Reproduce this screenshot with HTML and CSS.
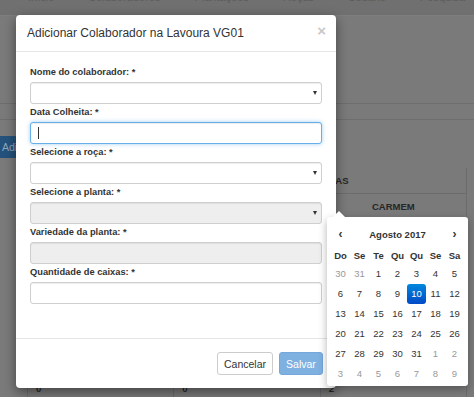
FILE: index.html
```
<!DOCTYPE html>
<html lang="pt-BR">

<head>
    <meta charset="UTF-8">
    <meta name="viewport" content="width=device-width, initial-scale=1.0">
    <title>Colheita</title>
    <link rel="stylesheet" href="styles.css">
</head>

<body>
    <div class="page">
        <nav class="topnav">
            <span>Início</span>
            <span>Colaboradores</span>
            <span>Plantações</span>
            <span>Roças</span>
            <span>Usuário</span>
            <span>Pesquisa</span>
            <span>Logout</span>
        </nav>
        <div class="content">
            <div class="bg-lines">
                <div></div>
                <div></div>
            </div>
            <button class="btn-add">Adicionar</button>
            <table class="bg-table">
                <tr><th></th><th></th><th class="cut">CAIXAS</th></tr>
                <tr><th></th><th></th><th>CARMEM</th></tr>
                <tr><td></td><td></td><td></td></tr>
                <tr><td></td><td></td><td></td></tr>
                <tr><td></td><td></td><td></td></tr>
                <tr><td></td><td></td><td></td></tr>
                <tr><td></td><td></td><td></td></tr>
                <tr><td></td><td></td><td></td></tr>
                <tr><td>0</td><td>0</td><td>2</td></tr>
            </table>
        </div>
    </div>

    <div class="modal">
        <div class="modal-header">
            <span class="modal-title">Adicionar Colaborador na Lavoura VG01</span>
            <span class="close">&times;</span>
        </div>
        <div class="modal-body">
            <div class="form-group">
                <label>Nome do colaborador: *</label>
                <div class="field select"><i class="arrow"></i></div>
            </div>
            <div class="form-group">
                <label>Data Colheita: *</label>
                <div class="field focused"><i class="caret"></i></div>
            </div>
            <div class="form-group">
                <label>Selecione a roça: *</label>
                <div class="field select"><i class="arrow"></i></div>
            </div>
            <div class="form-group">
                <label>Selecione a planta: *</label>
                <div class="field select disabled"><i class="arrow"></i></div>
            </div>
            <div class="form-group">
                <label>Variedade da planta: *</label>
                <div class="field disabled"></div>
            </div>
            <div class="form-group">
                <label>Quantidade de caixas: *</label>
                <div class="field"></div>
            </div>
        </div>
        <div class="modal-footer">
            <button class="btn btn-default">Cancelar</button>
            <button class="btn btn-primary">Salvar</button>
        </div>
    </div>

    <div class="datepicker">
        <div class="dp-grid">
            <span class="dp-nav">&lsaquo;</span>
            <span class="dp-switch">Agosto 2017</span>
            <span class="dp-nav">&rsaquo;</span>

            <span class="dow">Do</span><span class="dow">Se</span><span class="dow">Te</span><span class="dow">Qu</span><span class="dow">Qu</span><span class="dow">Se</span><span class="dow">Sa</span>

            <span class="day old">30</span><span class="day old">31</span><span class="day">1</span><span class="day">2</span><span class="day">3</span><span class="day">4</span><span class="day">5</span>
            <span class="day">6</span><span class="day">7</span><span class="day">8</span><span class="day">9</span><span class="day active">10</span><span class="day">11</span><span class="day">12</span>
            <span class="day">13</span><span class="day">14</span><span class="day">15</span><span class="day">16</span><span class="day">17</span><span class="day">18</span><span class="day">19</span>
            <span class="day">20</span><span class="day">21</span><span class="day">22</span><span class="day">23</span><span class="day">24</span><span class="day">25</span><span class="day">26</span>
            <span class="day">27</span><span class="day">28</span><span class="day">29</span><span class="day">30</span><span class="day">31</span><span class="day old">1</span><span class="day old">2</span>
            <span class="day old">3</span><span class="day old">4</span><span class="day old">5</span><span class="day old">6</span><span class="day old">7</span><span class="day old">8</span><span class="day old">9</span>
        </div>
    </div>
</body>

</html>
```

FILE: styles.css
```
html,
body {
    margin: 0;
    height: 100%;
    overflow: hidden;
}

body {
    font-family: "Liberation Sans", Arial, sans-serif;
    background-color: #7a7a7a;
    color: #333;
}

.topnav {
    height: 15px;
    background-color: #707070;
    display: flex;
    gap: 34px;
    padding-left: 28px;
    overflow: hidden;
    border-bottom: 1px solid #7e7e7e;
}

.topnav span {
    font-size: 11px;
    color: #5c5c5c;
    margin-top: -9px;
}

.content {
    position: relative;
}

.bg-lines div {
    height: 15px;
    border-bottom: 1px solid #6e6e6e;
    margin-top: 72px;
}

.bg-lines div + div {
    margin-top: 0;
}

.btn-add {
    display: block;
    width: 26px;
    margin: 16px 0 0 -8px;
    height: 22px;
    padding: 0 0 0 10px;
    border: none;
    background-color: #24527c;
    color: #8fa6bd;
    font-family: inherit;
    font-size: 10.5px;
    text-align: left;
    white-space: nowrap;
    overflow: hidden;
    border-radius: 3px;
}

.bg-table {
    border-collapse: collapse;
    margin: 10px 0 0 27px;
    width: 440px;
    table-layout: fixed;
}

.bg-table th,
.bg-table td {
    height: 25px;
    padding: 0 8px;
    border: 1px solid #6c6c6c;
    font-size: 9.5px;
    font-weight: bold;
    color: #262626;
}

.bg-table th {
    text-align: center;
}

.bg-table th.cut {
    text-align: left;
    text-indent: -16px;
}

.bg-table tr:first-child th {
    border-top: none;
}

.bg-table td {
    text-align: left;
}

/* modal */
.modal {
    position: absolute;
    left: 16px;
    top: 15px;
    width: 320px;
    background-color: #fff;
    border-radius: 4px;
    box-shadow: 0 4px 12px rgba(0, 0, 0, 0.45);
}

.modal-header {
    height: 36px;
    padding: 0 10px 0 11px;
    display: flex;
    align-items: center;
    justify-content: space-between;
    border-bottom: 1px solid #e5e5e5;
}

.modal-title {
    font-size: 12px;
    color: #333;
}

.close {
    font-size: 15px;
    font-weight: bold;
    color: #c8c8c8;
    margin-top: -5px;
}

.modal-body {
    padding: 14px 14px 32px;
}

.form-group {
    margin-bottom: 2px;
}

.form-group label {
    display: block;
    font-size: 9.3px;
    font-weight: bold;
    line-height: 12px;
    margin-bottom: 4px;
    color: #333;
}

.field {
    height: 22px;
    box-sizing: border-box;
    border: 1px solid #cfcfcf;
    border-radius: 3px;
    background-color: #fff;
    box-shadow: inset 0 1px 1px rgba(0, 0, 0, 0.075);
    display: flex;
    align-items: center;
}

.field.select {
    justify-content: flex-end;
    padding-right: 4px;
}

.field.disabled {
    background-color: #eee;
}

.field.focused {
    border-color: #66afe9;
    box-shadow: inset 0 1px 1px rgba(0, 0, 0, 0.075), 0 0 4px rgba(102, 175, 233, 0.6);
}

.arrow {
    width: 0;
    height: 0;
    border-left: 2.5px solid transparent;
    border-right: 2.5px solid transparent;
    border-top: 4px solid #333;
}

.caret {
    width: 1px;
    height: 12px;
    margin-left: 7px;
    background-color: #333;
}

.modal-footer {
    border-top: 1px solid #e5e5e5;
    padding: 13px 13px 13px;
    display: flex;
    justify-content: flex-end;
    gap: 6px;
}

.btn {
    height: 23px;
    padding: 0 6px;
    font-family: inherit;
    font-size: 10.5px;
    border-radius: 3px;
    border: 1px solid #ccc;
}

.btn-default {
    background-color: #fff;
    color: #333;
}

.btn-primary {
    width: 44px;
    background-color: #7eb0e0;
    border-color: #74a7da;
    color: #fff;
}

/* datepicker */
.datepicker {
    position: absolute;
    left: 327px;
    top: 217px;
    padding: 7px 4px 2px;
    background-color: #fff;
    border-radius: 3px;
    box-shadow: 0 3px 8px rgba(0, 0, 0, 0.3);
}

.datepicker::before {
    content: "";
    position: absolute;
    top: -6px;
    left: 6px;
    border-left: 6px solid transparent;
    border-right: 6px solid transparent;
    border-bottom: 6px solid #fff;
}

.dp-grid {
    display: grid;
    grid-template-columns: repeat(7, 19px);
    grid-auto-rows: 20px;
    font-size: 9.5px;
    text-align: center;
    align-items: center;
}

.dp-nav {
    font-size: 12px;
    font-weight: bold;
}

.dp-switch {
    grid-column: span 5;
    font-weight: bold;
}

.dow {
    font-weight: bold;
    align-self: end;
    padding-bottom: 3px;
}

.day {
    height: 20px;
    line-height: 20px;
    border-radius: 3px;
    color: #333;
}

.day.old {
    color: #999;
}

.day.active {
    background: linear-gradient(#0088dd, #0049c6);
    color: #fff;
}
```
